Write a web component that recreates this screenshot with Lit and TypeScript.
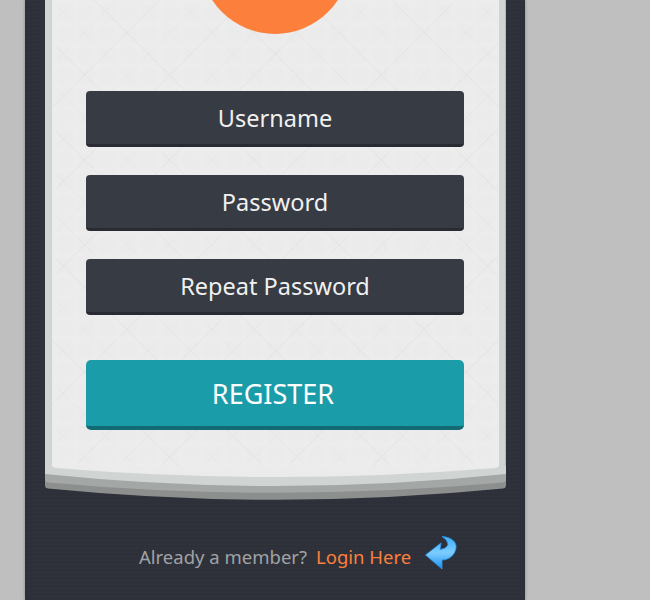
import { LitElement, html, css } from "lit";
import { customElement } from "lit/decorators.js";

@customElement("app-root")
export class AppRoot extends LitElement {
  static styles = css`
    :host { display: block; width: 650px; height: 600px; overflow: hidden; background: #bfbfbf; font-family: "Noto Sans", "Open Sans", sans-serif; }
    .panel { box-sizing: border-box; width: 500px; height: 600px; margin-left: 25px; padding: 0 19px 0 20px; background-color: #2d3038;
      background-image: linear-gradient(rgba(255,255,255,.012) 1px, transparent 1px), linear-gradient(90deg, rgba(255,255,255,.012) 1px, transparent 1px);
      background-size: 4px 4px; box-shadow: 0 0 3px rgba(0,0,0,.3); overflow: hidden; }
    .card { box-sizing: border-box; height: 466px; margin-right: 1px; padding: 0 35px 0 34px; background-color: #ebebeb;
      border-left: 7px solid #d0d5d3; border-right: 6px solid #d0d5d3; box-shadow: 1px 0 0 #b4b9b7;
      background-image:
        repeating-linear-gradient(45deg, transparent 0 29px, rgba(0,0,0,.02) 29px 30px),
        repeating-linear-gradient(-45deg, transparent 0 29px, rgba(0,0,0,.02) 29px 30px),
        linear-gradient(90deg, rgba(255,255,255,.07) 0 6px, transparent 6px 21px),
        linear-gradient(rgba(255,255,255,.07) 0 6px, transparent 6px 21px);
      background-size: auto, auto, 21px 21px, 21px 21px;
      display: flex; flex-direction: column; align-items: stretch; }
    .avatar { flex: none; width: 150px; height: 150px; border-radius: 50%; background: #fd7f3c; margin: -116px auto 57px; }
    .field { height: 56px; box-sizing: border-box; display: flex; align-items: center; justify-content: center; background: #373b43; border-bottom: 3px solid #282b32; border-radius: 4px; color: #f0f0f0; font-size: 23.5px; margin-bottom: 28px; }
    .btn { height: 70px; box-sizing: border-box; margin-top: 17px; display: flex; align-items: center; justify-content: center; background: #1a9da9; border-bottom: 4px solid #136a72; border-radius: 5px; color: #fff; font-size: 27px; padding: 1px 4px 0 0; }
    .curve { display: block; width: 461px; height: 34px; }
    .foot { display: flex; align-items: center; height: 52px; padding: 30px 0 0 94px; font-size: 18.5px; }
    .q { color: #a0a3a5; }
    .l { color: #fc7f3c; margin-left: 9px; }
    .arrow { flex: none; margin: -8px 0 0 14px; width: 32px; height: 35px; }
  `;
  render() {
    return html`<div class="panel">
      <div class="card">
        <div class="avatar"></div>
        <div class="field">Username</div>
        <div class="field">Password</div>
        <div class="field">Repeat Password</div>
        <div class="btn">REGISTER</div>
      </div>
      <svg class="curve" viewBox="0 0 461 34">
        <path d="M0 0H461V19Q461 22 458 22.5Q230 45 3 22.5Q0 22 0 19Z" fill="#8c8f8e"/>
        <path d="M0 0H461V13Q461 16 458 16.5Q230 37 3 16.5Q0 16 0 13Z" fill="#a3a8a6"/>
        <path d="M0 0H461V8Q230 32 0 8Z" fill="#d0d5d3"/>
        <path d="M7 0H454Q453 2 450 2Q230 20 11 2Q8 2 7 0Z" fill="#ebebeb"/>
      </svg>
      <div class="foot"><span class="q">Already a member?</span><span class="l">Login Here</span>
        <svg class="arrow" viewBox="0 0 32 35">
          <defs><linearGradient id="g" x1="0" y1="0" x2="0" y2="1"><stop offset="0" stop-color="#3fb0fb"/><stop offset=".5" stop-color="#7ccdfd"/><stop offset="1" stop-color="#1c8fec"/></linearGradient></defs>
          <path d="M0.5 20L16 8L15 14.5Q21 14 23 10Q23 5 17 1.5C26 2 32 7 31 13C30 20 24 25 17 25L17 34Z" fill="url(#g)" stroke="#2a9bf5" stroke-width=".8" stroke-linejoin="round"/>
        </svg>
      </div>
    </div>`;
  }
}
